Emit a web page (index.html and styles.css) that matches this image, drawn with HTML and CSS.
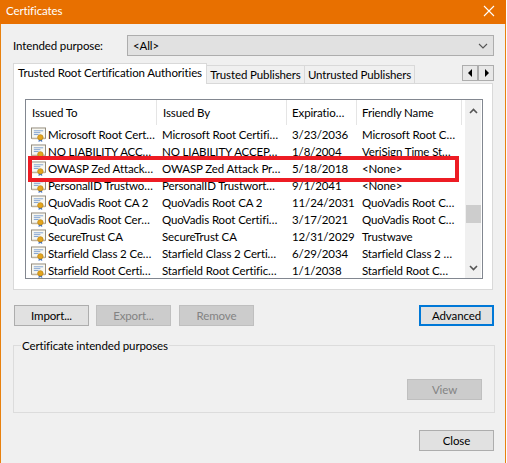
FILE: index.html
```html
<!DOCTYPE html>
<html lang="en">
<head>
<meta charset="utf-8">
<title>Certificates</title>
<link rel="stylesheet" href="styles.css">
</head>
<body>
<svg class="defs" width="0" height="0" aria-hidden="true">
  <symbol id="cert" viewBox="0 0 16 16">
    <rect x="0.5" y="0.5" width="15" height="11" fill="#f8f8f2" stroke="#8f8778"/>
    <path d="M1 12h14" stroke="#c9b99a" fill="none"/>
    <path d="M3 3.5h10M3 5.5h7M3 7.5h5" stroke="#7d9fd0" fill="none"/>
    <path d="M8.5 11l-.5 4.5 2-1 2 1-.5-4.5z" fill="#3f74c8"/>
    <circle cx="10" cy="10.5" r="2.9" fill="#e3a51e" stroke="#b97f0c" stroke-width=".7"/>
  </symbol>
</svg>
<div class="window">
  <header class="titlebar">
    <span class="title">Certificates</span>
    <svg class="close-x" width="12" height="12" viewBox="0 0 12 12"><path d="M1 1l10 10M11 1L1 11" stroke="#fff" stroke-width="1.1" fill="none"/></svg>
  </header>
  <main class="content">
    <div class="purpose">
      <label class="purpose-label">Intended purpose:</label>
      <div class="combo">
        <span>&lt;All&gt;</span>
        <svg width="10" height="6" viewBox="0 0 10 6"><path d="M1 1l4 4 4-4" stroke="#555" stroke-width="1.1" fill="none"/></svg>
      </div>
    </div>
    <div class="tabs">
      <div class="tab active">Trusted Root Certification Authorities</div>
      <div class="tab pub">Trusted Publishers</div>
      <div class="tab unt">Untrusted Publishers</div>
      <div class="scroller">
        <span class="sbtn"><svg width="5" height="8" viewBox="0 0 5 8"><path d="M4 0v8L0 4z"/></svg></span>
        <span class="sbtn"><svg width="5" height="8" viewBox="0 0 5 8"><path d="M1 0v8l4-4z"/></svg></span>
      </div>
    </div>
    <section class="panel">
      <div class="list">
        <div class="list-main">
          <div class="row head">
            <div class="hc">Issued To</div>
            <div class="hc">Issued By</div>
            <div class="hc">Expiratio…</div>
            <div class="hc">Friendly Name</div>
          </div>
          <div class="row"><div class="cell first"><svg class="ico"><use href="#cert"/></svg>Microsoft Root Cert…</div><div class="cell">Microsoft Root Certifi…</div><div class="cell">3/23/2036</div><div class="cell">Microsoft Root C…</div></div>
          <div class="row"><div class="cell first"><svg class="ico"><use href="#cert"/></svg>NO LIABILITY ACC…</div><div class="cell">NO LIABILITY ACCEP…</div><div class="cell">1/8/2004</div><div class="cell">VeriSign Time St…</div></div>
          <div class="row"><div class="cell first"><svg class="ico"><use href="#cert"/></svg>OWASP Zed Attack…</div><div class="cell">OWASP Zed Attack Pr…</div><div class="cell">5/18/2018</div><div class="cell">&lt;None&gt;</div></div>
          <div class="row"><div class="cell first"><svg class="ico"><use href="#cert"/></svg>PersonalID Trustwo…</div><div class="cell">PersonalID Trustwort…</div><div class="cell">9/1/2041</div><div class="cell">&lt;None&gt;</div></div>
          <div class="row"><div class="cell first"><svg class="ico"><use href="#cert"/></svg>QuoVadis Root CA 2</div><div class="cell">QuoVadis Root CA 2</div><div class="cell">11/24/2031</div><div class="cell">QuoVadis Root C…</div></div>
          <div class="row"><div class="cell first"><svg class="ico"><use href="#cert"/></svg>QuoVadis Root Cer…</div><div class="cell">QuoVadis Root Certifi…</div><div class="cell">3/17/2021</div><div class="cell">QuoVadis Root C…</div></div>
          <div class="row"><div class="cell first"><svg class="ico"><use href="#cert"/></svg>SecureTrust CA</div><div class="cell">SecureTrust CA</div><div class="cell">12/31/2029</div><div class="cell">Trustwave</div></div>
          <div class="row"><div class="cell first"><svg class="ico"><use href="#cert"/></svg>Starfield Class 2 Ce…</div><div class="cell">Starfield Class 2 Certi…</div><div class="cell">6/29/2034</div><div class="cell">Starfield Class 2 …</div></div>
          <div class="row"><div class="cell first"><svg class="ico"><use href="#cert"/></svg>Starfield Root Certi…</div><div class="cell">Starfield Root Certific…</div><div class="cell">1/1/2038</div><div class="cell">Starfield Root C…</div></div>
        </div>
        <div class="vscroll">
          <svg width="9" height="6" viewBox="0 0 9 6"><path d="M1 5l3.5-3.5L8 5" stroke="#555" stroke-width="1.6" fill="none"/></svg>
          <div class="thumb"></div>
          <svg width="9" height="6" viewBox="0 0 9 6"><path d="M1 1l3.5 3.5L8 1" stroke="#555" stroke-width="1.6" fill="none"/></svg>
        </div>
      </div>
      <div class="highlight"></div>
    </section>
    <div class="actions">
      <button class="btn">Import...</button>
      <button class="btn off">Export...</button>
      <button class="btn off">Remove</button>
      <button class="btn focus">Advanced</button>
    </div>
    <fieldset class="group">
      <legend>Certificate intended purposes</legend>
      <button class="btn off">View</button>
    </fieldset>
    <div class="closing"><button class="btn">Close</button></div>
  </main>
</div>
</body>
</html>
```
FILE: styles.css
```css
* { box-sizing: border-box; }
html, body { margin: 0; height: 100%; background: #fdfdfd; }
body { font: 11.5px/16px Lato, "Open Sans", sans-serif; letter-spacing: -0.12px; color: #000; overflow: hidden; }
.defs { position: absolute; }
.window { width: 506px; height: 463px; background: #f0f0f0; border-left: 1px solid #e8810f; border-right: 1px solid #e8810f; display: flex; flex-direction: column; }
.titlebar { height: 24px; flex: none; margin: 0 -1px; background: #e87000; color: #fff; display: flex; align-items: center; justify-content: space-between; padding: 0 11px 2px 6px; }
.content { flex: 1; padding: 11px 10px 0 12px; display: flex; flex-direction: column; }
.purpose { display: flex; align-items: center; height: 21px; }
.purpose-label { width: 114px; }
.combo { width: 367px; height: 21px; background: #e1e1e1; border: 1px solid #adadad; display: flex; align-items: center; justify-content: space-between; padding: 0 5px; }
.tabs { display: flex; align-items: flex-end; height: 20px; margin-top: 7px; position: relative; z-index: 1; }
.tab { height: 18px; background: #f0f0f0; border: 1px solid #d9d9d9; border-bottom: 0; border-left: 0; padding-top: 1px; text-align: center; white-space: nowrap; }
.tab.active { width: 194px; height: 21px; background: #fff; border-left: 1px solid #d9d9d9; margin-bottom: -1px; padding-top: 1px; }
.tab.pub { width: 98px; }
.tab.unt { width: 110px; }
.scroller { margin-left: auto; margin-right: 1px; align-self: flex-start; margin-top: 2px; display: flex; }
.sbtn { width: 16px; height: 16px; background: #e8e8e8; border: 1px solid #adadad; display: flex; align-items: center; justify-content: center; }
.panel { position: relative; height: 207px; width: 480px; background: #fff; border: 1px solid #d9d9d9; padding: 15px 10px 0 11px; }
.list { display: flex; height: 180px; width: 458px; border: 1px solid #828790; background: #fff; overflow: hidden; }
.list-main { width: 436px; flex: none; }
.row { display: grid; grid-template-columns: 131px 130px 70px 105px; height: 17px; align-items: center; white-space: nowrap; }
.row.head { height: 25px; margin-bottom: 1px; }
.hc { height: 25px; line-height: 25px; padding-left: 6px; border-right: 1px solid #e5e5e5; }
.hc:nth-child(3) { padding-left: 5px; }
.hc:nth-child(4) { padding-left: 5px; }
.cell { padding-left: 5px; }
.cell.first { padding-left: 5px; display: flex; align-items: center; gap: 2px; }
.ico { width: 15px; height: 16px; flex: none; }
.vscroll { margin-left: 3px; width: 16px; height: 178px; background: #f0f0f0; display: flex; flex-direction: column; align-items: center; padding-top: 8px; }
.thumb { width: 15px; height: 18px; background: #cdcdcd; margin-top: 91px; margin-bottom: 42px; }
.highlight { position: absolute; left: 14px; top: 72px; width: 431px; height: 26px; border: 4px solid #ed1c24; }
.btn { width: 75px; height: 21px; padding: 0; background: #e1e1e1; border: 1px solid #adadad; font: inherit; letter-spacing: inherit; color: #000; }
.btn.off { background: #cccccc; border-color: #bfbfbf; color: #838383; }
.btn.focus { border: 2px solid #0078d7; margin-left: auto; }
.actions { display: flex; gap: 7px; margin-top: 15px; padding-left: 1px; padding-right: 1px; }
.actions .btn.off + .btn.off { margin-left: 1px; }
.group { display: block; text-align: right; width: 482px; height: 68px; margin: 19px 0 0; padding: 33px 12px 0 0; border: 1px solid #dcdcdc; position: relative; }
.group legend { position: absolute; top: -8px; left: 7px; background: #f0f0f0; padding: 0 1px; line-height: 16px; }
.closing { display: flex; justify-content: flex-end; margin-top: 17px; padding-right: 1px; }
```
